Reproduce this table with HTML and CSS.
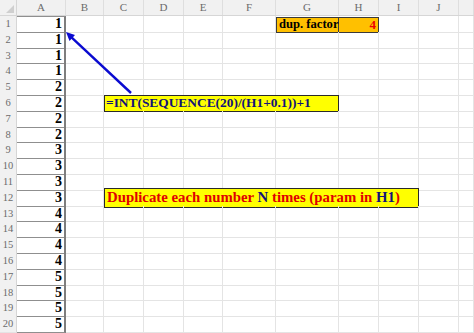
FILE: index.html
```html
<!DOCTYPE html>
<html>
<head>
<meta charset="utf-8">
<link rel="stylesheet" href="styles.css">
</head>
<body>
<div class="sheet">
  <div class="row head">
    <div class="corner"><span class="tri"></span></div>
    <div class="ch">A</div><div class="ch">B</div><div class="ch">C</div><div class="ch">D</div><div class="ch">E</div><div class="ch">F</div><div class="ch">G</div><div class="ch">H</div><div class="ch">I</div><div class="ch">J</div><div class="ch"></div>
  </div>
  <div class="row"><div class="rh">1</div><div class="c a a1">1</div><div class="c"></div><div class="c"></div><div class="c"></div><div class="c"></div><div class="c"></div><div class="c g1">dup. factor</div><div class="c h1">4</div><div class="c"></div><div class="c"></div><div class="c"></div></div>
  <div class="row"><div class="rh">2</div><div class="c a">1</div><div class="c"></div><div class="c"></div><div class="c"></div><div class="c"></div><div class="c"></div><div class="c"></div><div class="c"></div><div class="c"></div><div class="c"></div><div class="c"></div></div>
  <div class="row"><div class="rh">3</div><div class="c a">1</div><div class="c"></div><div class="c"></div><div class="c"></div><div class="c"></div><div class="c"></div><div class="c"></div><div class="c"></div><div class="c"></div><div class="c"></div><div class="c"></div></div>
  <div class="row"><div class="rh">4</div><div class="c a">1</div><div class="c"></div><div class="c"></div><div class="c"></div><div class="c"></div><div class="c"></div><div class="c"></div><div class="c"></div><div class="c"></div><div class="c"></div><div class="c"></div></div>
  <div class="row"><div class="rh">5</div><div class="c a">2</div><div class="c"></div><div class="c"></div><div class="c"></div><div class="c"></div><div class="c"></div><div class="c"></div><div class="c"></div><div class="c"></div><div class="c"></div><div class="c"></div></div>
  <div class="row"><div class="rh">6</div><div class="c a">2</div><div class="c"></div><div class="formula">=INT(SEQUENCE(20)/(H1+0.1))+1</div><div class="c"></div><div class="c"></div><div class="c"></div><div class="c"></div></div>
  <div class="row"><div class="rh">7</div><div class="c a">2</div><div class="c"></div><div class="c"></div><div class="c"></div><div class="c"></div><div class="c"></div><div class="c"></div><div class="c"></div><div class="c"></div><div class="c"></div><div class="c"></div></div>
  <div class="row"><div class="rh">8</div><div class="c a">2</div><div class="c"></div><div class="c"></div><div class="c"></div><div class="c"></div><div class="c"></div><div class="c"></div><div class="c"></div><div class="c"></div><div class="c"></div><div class="c"></div></div>
  <div class="row"><div class="rh">9</div><div class="c a">3</div><div class="c"></div><div class="c"></div><div class="c"></div><div class="c"></div><div class="c"></div><div class="c"></div><div class="c"></div><div class="c"></div><div class="c"></div><div class="c"></div></div>
  <div class="row"><div class="rh">10</div><div class="c a">3</div><div class="c"></div><div class="c"></div><div class="c"></div><div class="c"></div><div class="c"></div><div class="c"></div><div class="c"></div><div class="c"></div><div class="c"></div><div class="c"></div></div>
  <div class="row"><div class="rh">11</div><div class="c a">3</div><div class="c"></div><div class="c"></div><div class="c"></div><div class="c"></div><div class="c"></div><div class="c"></div><div class="c"></div><div class="c"></div><div class="c"></div><div class="c"></div></div>
  <div class="row"><div class="rh">12</div><div class="c a">3</div><div class="c"></div><div class="note"><span class="red">Duplicate each number </span><span class="navy">N</span><span class="red"> times (param in </span><span class="navy">H1</span><span class="red">)</span></div><div class="c"></div><div class="c"></div></div>
  <div class="row"><div class="rh">13</div><div class="c a">4</div><div class="c"></div><div class="c"></div><div class="c"></div><div class="c"></div><div class="c"></div><div class="c"></div><div class="c"></div><div class="c"></div><div class="c"></div><div class="c"></div></div>
  <div class="row"><div class="rh">14</div><div class="c a">4</div><div class="c"></div><div class="c"></div><div class="c"></div><div class="c"></div><div class="c"></div><div class="c"></div><div class="c"></div><div class="c"></div><div class="c"></div><div class="c"></div></div>
  <div class="row"><div class="rh">15</div><div class="c a">4</div><div class="c"></div><div class="c"></div><div class="c"></div><div class="c"></div><div class="c"></div><div class="c"></div><div class="c"></div><div class="c"></div><div class="c"></div><div class="c"></div></div>
  <div class="row"><div class="rh">16</div><div class="c a">4</div><div class="c"></div><div class="c"></div><div class="c"></div><div class="c"></div><div class="c"></div><div class="c"></div><div class="c"></div><div class="c"></div><div class="c"></div><div class="c"></div></div>
  <div class="row"><div class="rh">17</div><div class="c a">5</div><div class="c"></div><div class="c"></div><div class="c"></div><div class="c"></div><div class="c"></div><div class="c"></div><div class="c"></div><div class="c"></div><div class="c"></div><div class="c"></div></div>
  <div class="row"><div class="rh">18</div><div class="c a">5</div><div class="c"></div><div class="c"></div><div class="c"></div><div class="c"></div><div class="c"></div><div class="c"></div><div class="c"></div><div class="c"></div><div class="c"></div><div class="c"></div></div>
  <div class="row"><div class="rh">19</div><div class="c a">5</div><div class="c"></div><div class="c"></div><div class="c"></div><div class="c"></div><div class="c"></div><div class="c"></div><div class="c"></div><div class="c"></div><div class="c"></div><div class="c"></div></div>
  <div class="row"><div class="rh">20</div><div class="c a">5</div><div class="c"></div><div class="c"></div><div class="c"></div><div class="c"></div><div class="c"></div><div class="c"></div><div class="c"></div><div class="c"></div><div class="c"></div><div class="c"></div></div>
  <svg class="arrow" width="474" height="333" viewBox="0 0 474 333">
    <line x1="131" y1="93" x2="71.5" y2="37.3" stroke="#0a0ad0" stroke-width="2.4"/>
    <polygon points="66,32 75,35 69.5,41" fill="#0a0ad0"/>
  </svg>
</div>
</body>
</html>
```

FILE: styles.css
```css
html, body {
  margin: 0;
  padding: 0;
}
body {
  width: 474px;
  height: 333px;
  overflow: hidden;
  background: #ffffff;
  font-family: "Liberation Serif", "Times New Roman", serif;
}
.sheet {
  position: relative;
  width: 474px;
}
.row {
  display: grid;
  grid-template-columns: 17px 49px 38px 40px 40px 39px 53px 63px 40px 40px 40px 1fr;
  height: 15.8px;
}
.head {
  height: 16px;
  background: #f1f1f1;
  box-sizing: border-box;
  border-bottom: 1px solid #d6d6d6;
}
.corner {
  position: relative;
  border-right: 1px solid #d6d6d6;
}
.tri {
  position: absolute;
  right: 2px;
  bottom: 2px;
  width: 0;
  height: 0;
  border-left: 8px solid transparent;
  border-bottom: 8px solid #cfcfcf;
}
.ch {
  font-size: 11px;
  line-height: 15px;
  color: #6b6b6b;
  text-align: center;
  box-sizing: border-box;
  border-right: 1px solid #dedede;
}
.rh {
  background: #f1f1f1;
  color: #6b6b6b;
  font-size: 10.5px;
  line-height: 15.8px;
  text-align: center;
  box-sizing: border-box;
  border-right: 1px solid #d6d6d6;
  border-bottom: 1px solid #e4e4e4;
}
.c {
  box-sizing: border-box;
  border-right: 1px solid #e4e4e4;
  border-bottom: 1px solid #e4e4e4;
  overflow: visible;
  white-space: nowrap;
}
.a {
  border-right: 2px solid #7e7e7e;
  border-bottom: 1.5px solid #8f8f8f;
  font-weight: bold;
  font-size: 14px;
  line-height: 15px;
  text-align: right;
  padding-right: 2px;
  color: #000;
}
.a1 {
  border-top: 1px solid #8f8f8f;
  line-height: 14px;
}
.g1 {
  background: #ffc000;
  border: 1px solid #3a3a3a;
  font-weight: bold;
  font-size: 12.6px;
  line-height: 13px;
  padding-left: 2px;
  margin-top: 1px;
  color: #000;
}
.h1 {
  background: #ffc000;
  border: 1px solid #3a3a3a;
  border-left: none;
  font-weight: bold;
  font-size: 13px;
  line-height: 13px;
  text-align: right;
  padding-right: 2px;
  margin-top: 1px;
  color: #ee0000;
}
.formula {
  grid-column: span 5;
  background: #ffff00;
  border: 1.5px solid #2a2a2a;
  box-sizing: border-box;
  font-weight: bold;
  font-size: 13.4px;
  line-height: 13px;
  padding-left: 1px;
  color: #12127a;
  white-space: nowrap;
}
.note {
  grid-column: span 7;
  background: #ffff00;
  border: 1.5px solid #2a2a2a;
  box-sizing: border-box;
  margin: -2px 0 -1px 0;
  font-weight: bold;
  font-size: 14.8px;
  line-height: 16px;
  padding-left: 2px;
  white-space: nowrap;
}
.red {
  color: #e00000;
}
.navy {
  color: #12127a;
}
.arrow {
  position: absolute;
  left: 0;
  top: 0;
  pointer-events: none;
}
```
